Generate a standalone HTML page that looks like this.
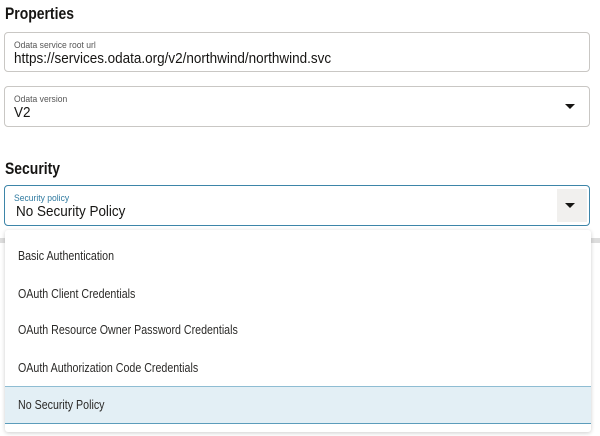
<!DOCTYPE html>
<html><head><style>
body{margin:0;width:600px;height:436px;background:#fff;font-family:"Liberation Sans",sans-serif;color:#161513;position:relative;overflow:hidden}
.h{position:absolute;left:5px;font-weight:bold;font-size:17px;transform:scaleX(.82);transform-origin:0 0;white-space:nowrap}
.box{position:absolute;left:4px;width:586px;border:1px solid #c9c7c4;border-radius:4px;background:#fff;box-sizing:border-box}
.lbl{position:absolute;left:9px;top:7px;font-size:9.5px;color:#555;transform:scaleX(.9);transform-origin:0 0;white-space:nowrap}
.val{position:absolute;left:9px;top:18px;font-size:14.5px;transform:scaleX(.93);transform-origin:0 0;white-space:nowrap}
.arr{position:absolute;right:14px;top:17px;width:0;height:0;border-left:5px solid transparent;border-right:5px solid transparent;border-top:5px solid #161513}
.panel{position:absolute;left:5px;top:230px;width:586px;height:202px;background:#fff;box-shadow:0 1px 4px rgba(0,0,0,.2);border-radius:3px}
.it{position:absolute;left:13px;font-size:13px;color:#2b2a28;transform:scaleX(.82);transform-origin:0 0;white-space:nowrap}
</style></head><body>
<div style="position:absolute;left:0;top:238px;width:600px;height:5px;background:#ddd"></div>
<div class="h" style="top:4px">Properties</div>
<div class="box" style="top:32px;height:40px"><div class="lbl">Odata service root url</div><div class="val">https://services.odata.org/v2/northwind/northwind.svc</div></div>
<div class="box" style="top:86px;height:41px"><div class="lbl">Odata version</div><div class="val">V2</div><div class="arr"></div></div>
<div class="h" style="top:159px">Security</div>
<div class="box" style="top:185px;height:41px;border-color:#3d85a8"><div class="lbl" style="color:#2f7aa0">Security policy</div><div class="val" style="left:11px">No Security Policy</div><div style="position:absolute;right:2px;top:3px;width:30px;height:33px;background:#f1f0ee"></div><div class="arr"></div></div>
<div class="panel">
<div class="it" style="top:18px">Basic Authentication</div>
<div class="it" style="top:56px">OAuth Client Credentials</div>
<div class="it" style="top:92px">OAuth Resource Owner Password Credentials</div>
<div class="it" style="top:130px">OAuth Authorization Code Credentials</div>
<div style="position:absolute;left:0;top:156px;width:586px;height:36px;background:#e3eff5;border-top:1px solid #8fbdd3;border-bottom:1px solid #5b9cbb"></div>
<div class="it" style="top:167px">No Security Policy</div>
</div>
</body></html>
